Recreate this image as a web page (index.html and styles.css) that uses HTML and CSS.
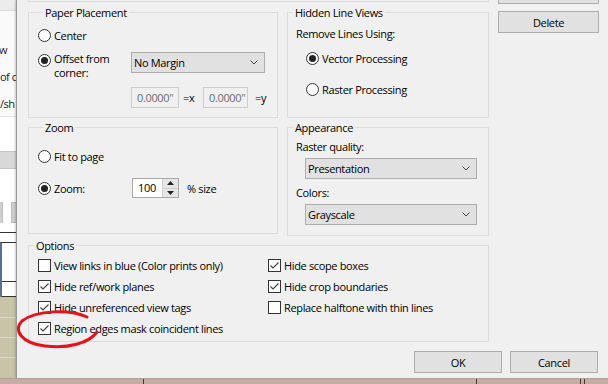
FILE: index.html
```html
<!DOCTYPE html>
<html>
<head>
<meta charset="utf-8">
<link rel="stylesheet" href="styles.css">
</head>
<body>
<div class="screen">
  <div class="top">
    <div class="bgwin">
      <div class="bw-top"></div>
      <div class="bw-list">
        <div class="bw-line bw-w">w</div>
        <div class="bw-line">of c</div>
        <div class="bw-line">/sh</div>
      </div>
      <div class="bw-gap1"></div>
      <div class="bw-gray"></div>
      <div class="bw-gap2"></div>
      <div class="bw-sq"><span class="sq1"></span><span class="sq2"></span></div>
      <div class="bw-gap3"></div>
      <div class="bw-gap4"></div>
      <div class="bw-table"><div class="bw-cell1"></div><div class="bw-cell2"></div></div>
      <div class="bw-khaki"><div class="kl"></div><div class="kl"></div><div class="kl"></div></div>
    </div>
    <div class="dialog">
      <div class="main">
        <div class="stub"></div>
        <div class="row r1">
          <div class="group paper">
            <div class="legend">Paper Placement</div>
            <div class="opt p-center"><span class="radio"></span><span class="lbl">Center</span></div>
            <div class="p-offset">
              <div class="optcol">
                <span class="radio on"></span>
                <span class="lbl two">Offset from<br>corner:</span>
              </div>
              <div class="select w134"><span>No Margin</span><svg class="chev" width="8" height="5" viewBox="0 0 8 5"><path d="M0.5 0.5 L4 4 L7.5 0.5" fill="none" stroke="#444" stroke-width="1"/></svg></div>
            </div>
            <div class="p-inputs">
              <div class="edit e1">0.0000"</div><span class="eq">=x</span>
              <div class="edit e2">0.0000"</div><span class="eq2">=y</span>
            </div>
          </div>
          <div class="group hidden">
            <div class="legend">Hidden Line Views</div>
            <div class="hl-label">Remove Lines Using:</div>
            <div class="opt hl-r1"><span class="radio on"></span><span class="lbl">Vector Processing</span></div>
            <div class="opt hl-r2"><span class="radio"></span><span class="lbl">Raster Processing</span></div>
          </div>
        </div>
        <div class="row r2">
          <div class="group zoom">
            <div class="legend">Zoom</div>
            <div class="opt z-fit"><span class="radio"></span><span class="lbl">Fit to page</span></div>
            <div class="z-row">
              <div class="optcol zc"><span class="radio on"></span><span class="lbl">Zoom:</span></div>
              <div class="spin"><span class="spin-val">100</span><span class="spin-btns"><span class="sb up"><svg width="7" height="4" viewBox="0 0 7 4"><path d="M0 4 L3.5 0 L7 4 Z" fill="#222"/></svg></span><span class="sb dn"><svg width="7" height="4" viewBox="0 0 7 4"><path d="M0 0 L3.5 4 L7 0 Z" fill="#222"/></svg></span></span></div>
              <span class="pct">% size</span>
            </div>
          </div>
          <div class="group appear">
            <div class="legend">Appearance</div>
            <div class="ap-label l1">Raster quality:</div>
            <div class="select ap-sel"><span>Presentation</span><svg class="chev" width="8" height="5" viewBox="0 0 8 5"><path d="M0.5 0.5 L4 4 L7.5 0.5" fill="none" stroke="#444" stroke-width="1"/></svg></div>
            <div class="ap-label l2">Colors:</div>
            <div class="select ap-sel"><span>Grayscale</span><svg class="chev" width="8" height="5" viewBox="0 0 8 5"><path d="M0.5 0.5 L4 4 L7.5 0.5" fill="none" stroke="#444" stroke-width="1"/></svg></div>
          </div>
        </div>
        <div class="group options">
          <div class="legend">Options</div>
          <div class="opt-grid">
            <div class="opt"><span class="cb"></span><span class="lbl">View links in blue (Color prints only)</span></div>
            <div class="opt"><span class="cb on"><svg width="11" height="11" viewBox="0 0 11 11"><path d="M1.5 5.5 L4 8 L9.5 2.5" fill="none" stroke="#404040" stroke-width="1.1"/></svg></span><span class="lbl">Hide scope boxes</span></div>
            <div class="opt"><span class="cb on"><svg width="11" height="11" viewBox="0 0 11 11"><path d="M1.5 5.5 L4 8 L9.5 2.5" fill="none" stroke="#404040" stroke-width="1.1"/></svg></span><span class="lbl">Hide ref/work planes</span></div>
            <div class="opt"><span class="cb on"><svg width="11" height="11" viewBox="0 0 11 11"><path d="M1.5 5.5 L4 8 L9.5 2.5" fill="none" stroke="#404040" stroke-width="1.1"/></svg></span><span class="lbl">Hide crop boundaries</span></div>
            <div class="opt"><span class="cb on"><svg width="11" height="11" viewBox="0 0 11 11"><path d="M1.5 5.5 L4 8 L9.5 2.5" fill="none" stroke="#404040" stroke-width="1.1"/></svg></span><span class="lbl">Hide unreferenced view tags</span></div>
            <div class="opt"><span class="cb"></span><span class="lbl">Replace halftone with thin lines</span></div>
            <div class="opt"><span class="cb on"><svg width="11" height="11" viewBox="0 0 11 11"><path d="M1.5 5.5 L4 8 L9.5 2.5" fill="none" stroke="#404040" stroke-width="1.1"/></svg></span><span class="lbl">Region edges mask coincident lines</span></div>
          </div>
        </div>
      </div>
      <div class="side">
        <div class="stubbtn"></div>
        <div class="btn delete">Delete</div>
      </div>
      <div class="footer">
        <div class="btn ok">OK</div>
        <div class="btn cancel">Cancel</div>
      </div>
    </div>
  </div>
  <div class="bottomstrip"><span class="vl v1"></span><span class="vl v2"></span><span class="vl v3"></span><span class="vl v4"></span></div>
</div>
<svg class="annot" width="608" height="384" viewBox="0 0 608 384"><path d="M87 317 C70 309, 36 310, 22 321 C13 330, 21 343, 45 346 C68 349, 89 343, 97 332" fill="none" stroke="#e4121b" stroke-width="3" stroke-linecap="round"/></svg>
</body>
</html>
```
FILE: styles.css
```css
body {
  margin: 0;
  width: 608px;
  height: 384px;
  overflow: hidden;
  position: relative;
  font-family: "Open Sans", "Noto Sans", sans-serif;
  font-size: 11px;
  letter-spacing: -0.35px;
  color: #000;
  background: #c6aca4;
}
.screen { display: flex; flex-direction: column; height: 384px; }
.top { display: flex; height: 378px; flex: none; }

/* background window strip */
.bgwin { width: 16px; flex: none; display: flex; flex-direction: column; overflow: hidden; background: #fff; white-space: nowrap; }
.bw-top { height: 10px; background: #ececec; border-bottom: 1px solid #d9d9d9; flex: none; }
.bw-list { height: 106px; box-sizing: border-box; padding-top: 25px; border-bottom: 1px solid #e3e3e3; background: #fafafa; flex: none; }
.bw-line { line-height: 27px; height: 27px; font-size: 11px; letter-spacing: -0.5px; color: #1a1a2a; }
.bw-w { margin-left: -1px; }
.bw-gap1 { height: 34px; flex: none; }
.bw-gray { height: 18px; box-sizing: border-box; background: #d8d8d8; border-top: 1px solid #c4c4c4; border-bottom: 1px solid #c4c4c4; flex: none; }
.bw-gap2 { height: 33px; flex: none; }
.bw-sq { height: 21px; flex: none; display: flex; gap: 8px; }
.sq1 { width: 3px; background: #d0d0d0; border-right: 1px solid #bdbdbd; }
.sq2 { width: 5px; background: #cfcfcf; border: 1px solid #bdbdbd; border-right: none; }
.bw-gap3 { height: 9px; border-bottom: 1px solid #333; flex: none; }
.bw-gap4 { height: 9px; flex: none; }
.bw-table { height: 55px; box-sizing: border-box; border-top: 1px solid #333; border-left: 2px solid #5b6e8a; flex: none; display: flex; flex-direction: column; }
.bw-cell1 { height: 38px; border-bottom: 1px solid #333; }
.bw-cell2 { flex: 1; border-bottom: 1px solid #333; }
.bw-khaki { flex: 1; background: #c8c4a7; display: flex; flex-direction: column; gap: 19px; padding-top: 20px; }
.kl { height: 1px; background: #dcd9c6; }

/* dialog */
.dialog {
  flex: 1;
  background: #f0f0f0;
  border-left: 1px solid #999;
  box-shadow: -1px 0 2px rgba(0,0,0,.2);
  display: grid;
  grid-template-columns: 461px 101px;
  column-gap: 9px;
  grid-template-rows: auto auto;
  align-content: start;
  padding-left: 11px;
}
.main { display: flex; flex-direction: column; }
.stub { height: 1px; border: 1px solid #dcdcdc; border-top: none; }
.row { display: flex; gap: 9px; }
.r1 { margin-top: 10px; }
.r2 { margin-top: 9px; align-items: flex-start; }

.group { border: 1px solid #dcdcdc; box-sizing: border-box; }
.legend { margin: -8px 0 0 5px; padding: 0 2px; background: #f0f0f0; height: 15px; line-height: 15px; width: max-content; }

.opt { display: flex; align-items: center; height: 16px; }
.lbl { margin-left: 3px; white-space: nowrap; }
.radio { width: 13px; height: 13px; box-sizing: border-box; border: 1px solid #333; border-radius: 50%; background: #fff; flex: none; display: flex; align-items: center; justify-content: center; }
.radio.on::after { content: ""; width: 7px; height: 7px; border-radius: 50%; background: #222; }

.paper { width: 250px; height: 106px; padding-left: 9px; }
.hidden { width: 202px; height: 106px; }
.p-center { margin-top: 7px; }
.p-offset { margin-top: 9px; display: flex; align-items: flex-start; }
.optcol { width: 93px; display: flex; align-items: flex-start; flex: none; }
.optcol .radio { margin-top: 2px; }
.lbl.two { line-height: 14px; margin-top: 0; }
.select { box-sizing: border-box; height: 21px; border: 1px solid #adadad; background: #e1e1e1; display: flex; align-items: center; justify-content: space-between; padding: 0 6px 0 2px; white-space: nowrap; }
.w134 { width: 134px; }
.p-inputs { margin-top: 7px; margin-left: 93px; display: flex; align-items: center; }
.edit { box-sizing: border-box; height: 21px; border: 1px solid #cdcdcd; background: #f0f0f0; color: #6d6d6d; padding-left: 5px; line-height: 19px; white-space: nowrap; overflow: hidden; }
.e1 { width: 48px; }
.e2 { width: 45px; }
.eq { width: 24px; padding-left: 4px; box-sizing: border-box; }
.eq2 { margin-left: 7px; }

.hl-label { margin-top: 6px; line-height: 16px; padding-left: 8px; }
.hl-r1 { margin-top: 8px; padding-left: 18px; }
.hl-r2 { margin-top: 15px; padding-left: 18px; }

.zoom { width: 250px; height: 107px; padding-left: 9px; }
.z-fit { margin-top: 13px; }
.z-row { margin-top: 14px; display: flex; align-items: center; height: 20px; }
.optcol.zc { width: 94px; align-items: center; }
.optcol.zc .radio { margin-top: 0; }
.spin { width: 47px; height: 20px; box-sizing: border-box; border: 1px solid #a8a8a8; background: #fff; display: flex; }
.spin-val { flex: 1; padding-left: 5px; line-height: 18px; }
.spin-btns { width: 15px; display: flex; flex-direction: column; border-left: 1px solid #d0d0d0; }
.sb { flex: 1; background: #e6e6e6; display: flex; align-items: center; justify-content: center; }
.sb.up { border-bottom: 1px solid #cfcfcf; }
.pct { margin-left: 8px; }

.appear { width: 202px; height: 109px; }
.ap-label { line-height: 16px; padding-left: 8px; }
.ap-label.l1 { margin-top: 4px; }
.ap-label.l2 { margin-top: 6px; }
.ap-sel { margin: 3px 0 0 17px; width: 172px; }

.options { margin-top: 9px; height: 97px; }
.opt-grid { margin-top: 2px; padding-left: 9px; display: grid; grid-template-columns: 230px auto; grid-auto-rows: 21px; }
.opt-grid .opt { height: 21px; }
.cb { width: 13px; height: 13px; box-sizing: border-box; border: 1px solid #333; background: #fff; flex: none; display: flex; align-items: center; justify-content: center; }

.side { display: flex; flex-direction: column; }
.stubbtn { height: 3px; border: 1px solid #adadad; border-top: none; background: #e1e1e1; }
.btn { box-sizing: border-box; height: 22px; border: 1px solid #adadad; background: #e1e1e1; display: flex; align-items: center; justify-content: center; }
.delete { margin-top: 7px; }
.footer { grid-column: 1 / -1; display: flex; justify-content: flex-end; gap: 8px; margin-top: 9px; padding-right: 1px; }
.ok, .cancel { width: 88px; }

.bottomstrip { flex: 1; display: flex; background: #c6aca4; border-top: 1px solid #b89c94; }
.vl { width: 1px; background: #4a3a36; flex: none; }
.v1 { margin-left: 143px; }
.v2 { margin-left: 332px; }
.v3 { margin-left: 103px; }
.v4 { margin-left: 3px; }

.annot { position: absolute; left: 0; top: 0; pointer-events: none; }
```
